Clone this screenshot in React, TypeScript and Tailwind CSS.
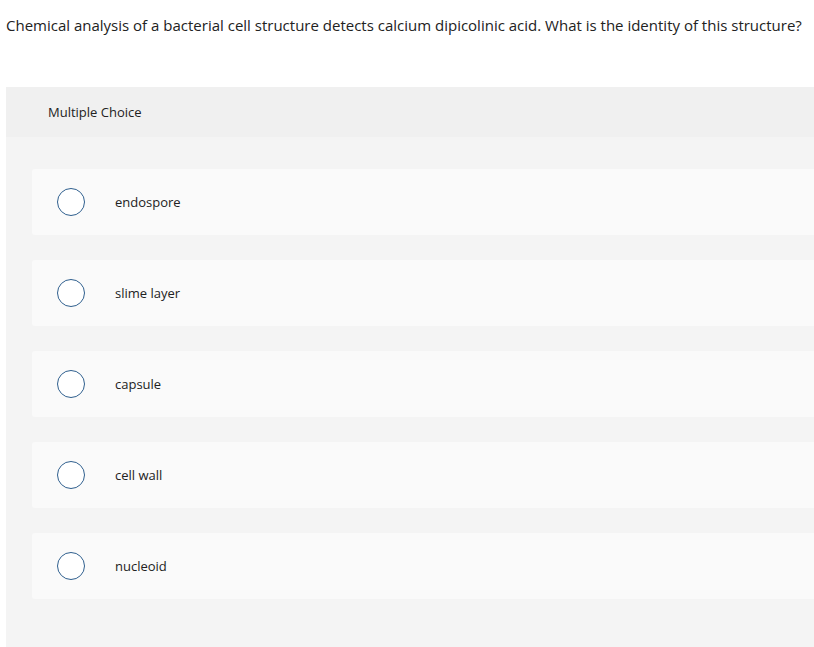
import React from "react";

const options = ["endospore", "slime layer", "capsule", "cell wall", "nucleoid"];

export default function App() {
  return (
    <div
      className="w-[814px] h-[647px] overflow-hidden bg-white"
      style={{ fontFamily: "'Open Sans', Lato, Arial, sans-serif" }}
    >
      <p className="pl-[6px] pt-[15px] text-[15px] leading-[20px] text-[#222]">
        Chemical analysis of a bacterial cell structure detects calcium dipicolinic acid. What is the identity of this structure?
      </p>
      <div className="ml-[6px] mt-[52px] w-[900px]">
        <div className="h-[50px] bg-[#f0f0f0] flex items-center pl-[42px] pt-[2px] text-[13px] text-[#222]">
          Multiple Choice
        </div>
        <div className="bg-[#f4f4f4] pt-[32px] pl-[26px] pb-[60px] flex flex-col gap-[25px]">
          {options.map((o) => (
            <div
              key={o}
              className="h-[66px] bg-[#fafafa] rounded-[3px] flex items-center"
            >
              <div className="ml-[25px] w-[28px] h-[28px] rounded-full border-[1.5px] border-[#2f5f8e] bg-white" />
              <span className="ml-[30px] pt-[2px] text-[13px] text-[#222]">{o}</span>
            </div>
          ))}
        </div>
      </div>
    </div>
  );
}
